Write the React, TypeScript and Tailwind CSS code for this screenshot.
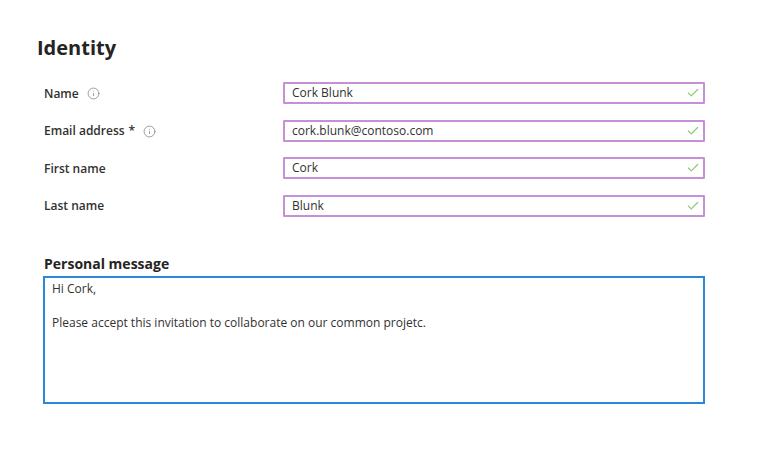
import { Check, Info } from 'lucide-react';

const fields = [
  { label: 'Name', info: true, required: false, value: 'Cork Blunk' },
  { label: 'Email address', info: true, required: true, value: 'cork.blunk@contoso.com' },
  { label: 'First name', info: false, required: false, value: 'Cork' },
  { label: 'Last name', info: false, required: false, value: 'Blunk' },
];

function FieldRow({ label, info, required, value }: (typeof fields)[number]) {
  return (
    <div className="flex items-center h-[22px]">
      <div className="w-[239px] flex items-center text-[12px] font-semibold text-[#323130] pt-[1px]">
        <span>{label}</span>
        {required && <span className="ml-[4px]">*</span>}
        {info && <Info className="w-[13px] h-[13px] ml-[8px] text-[#8a8886]" strokeWidth={1.5} />}
      </div>
      <div className="flex-1 h-[22px] flex items-center border-2 border-[#c590d6] rounded-[1px] pl-[7px] pr-[3px]">
        <span className="flex-1 text-[12px] text-[#323130]">{value}</span>
        <Check className="w-[14px] h-[14px] text-[#8fc671]" strokeWidth={2} />
      </div>
    </div>
  );
}

export default function App() {
  return (
    <div
      className="w-[768px] h-[455px] bg-white pl-[37px] pt-[34px]"
      style={{ fontFamily: '"Open Sans", "Noto Sans", sans-serif' }}
    >
      <h1 className="text-[20px] font-bold text-[#252423] leading-[28px]">Identity</h1>
      <div className="ml-[7px] w-[661px] mt-[20px] flex flex-col gap-[15.5px]">
        {fields.map((f) => (
          <FieldRow key={f.label} {...f} />
        ))}
      </div>
      <div className="ml-[6px] w-[662px] mt-[37px]">
        <div className="ml-[1px] text-[14px] font-bold text-[#252423] leading-[20px]">Personal message</div>
        <textarea
          readOnly
          className="mt-[2px] block w-full h-[128px] resize-none border-2 border-[#2b88d8] px-[7px] pt-[2px] text-[12px] leading-[17px] text-[#323130] outline-none"
          defaultValue={'Hi Cork,\n\nPlease accept this invitation to collaborate on our common projetc.'}
        />
      </div>
    </div>
  );
}
